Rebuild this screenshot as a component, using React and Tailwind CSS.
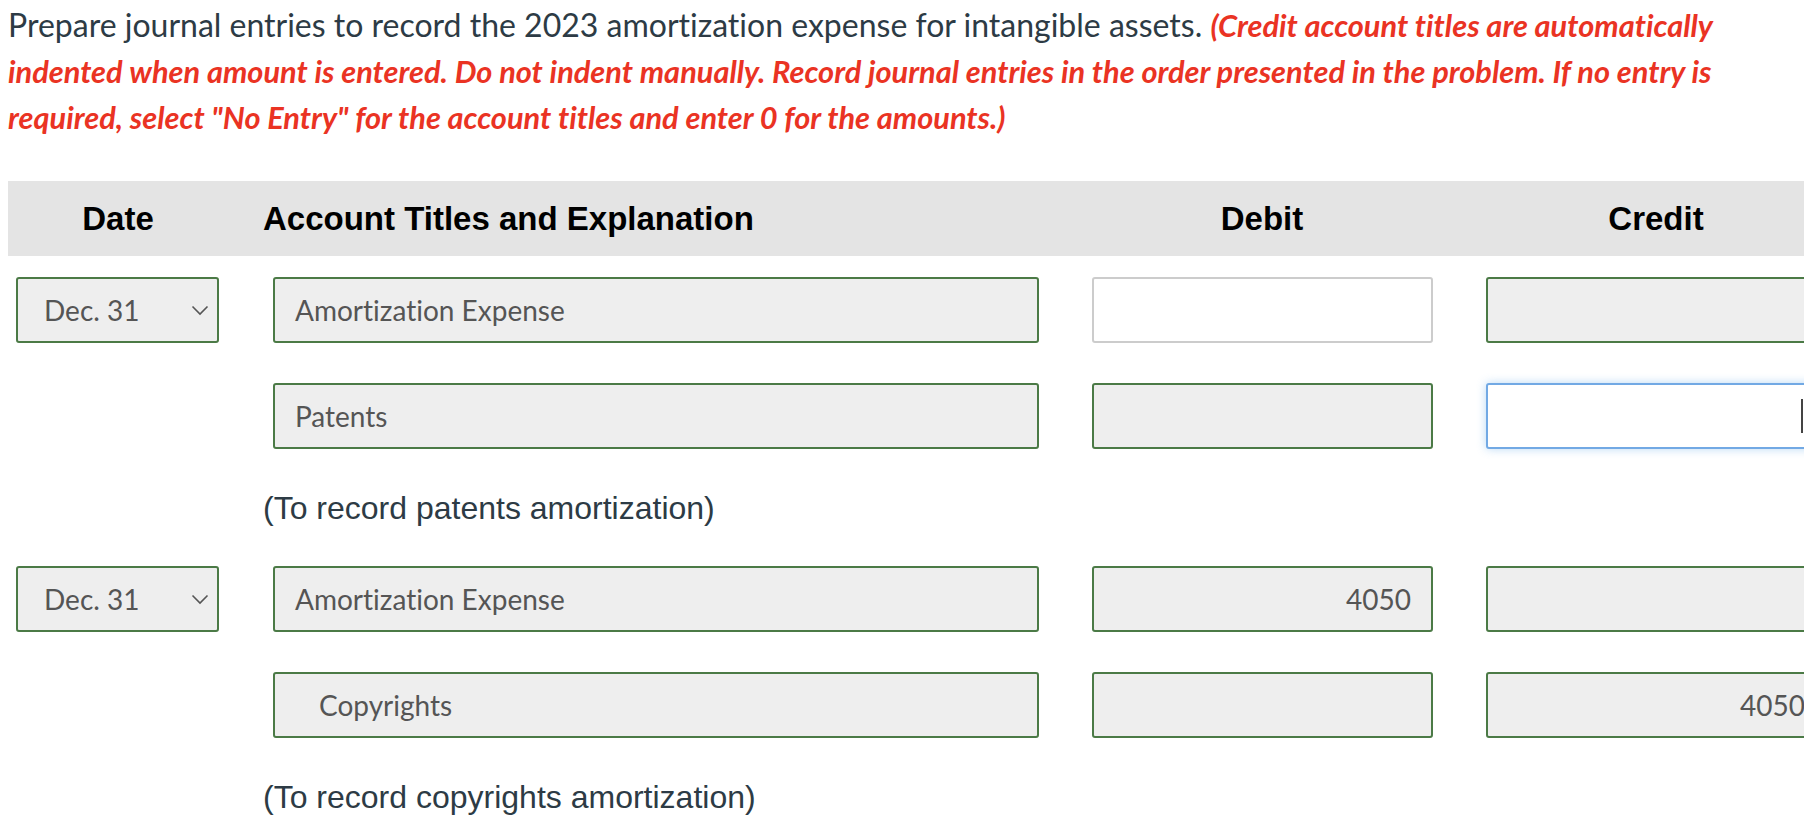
import React from "react";

const lato = { fontFamily: "Lato, 'Noto Sans', sans-serif", fontVariantLigatures: "none" };

function Chevron() {
  return (
    <svg width="18" height="11" viewBox="0 0 18 11" className="shrink-0">
      <polyline points="1.5,1.5 9,9 16.5,1.5" fill="none" stroke="#555" strokeWidth="1.6" />
    </svg>
  );
}

function DateBox() {
  return (
    <div className="ml-[8px] w-[203px] h-[66px] shrink-0 flex items-center justify-between pl-[26px] pr-[8px] bg-[#eeeeee] border-2 border-[#4b7a46] rounded-[3px] text-[28px] text-[#555]">
      <span>Dec. 31</span>
      <Chevron />
    </div>
  );
}

function Spacer() {
  return <div className="ml-[8px] w-[203px] shrink-0" />;
}

function AccountBox({ text, indent }) {
  return (
    <div
      className={
        "ml-[54px] w-[766px] h-[66px] shrink-0 flex items-center bg-[#eeeeee] border-2 border-[#4b7a46] rounded-[3px] text-[28px] text-[#555] " +
        (indent ? "pl-[44px]" : "pl-[20px]")
      }
    >
      {text}
    </div>
  );
}

function GreenAmount({ value }) {
  return (
    <div className="ml-[53px] w-[341px] h-[66px] shrink-0 flex items-center justify-end pr-[20px] bg-[#eeeeee] border-2 border-[#4b7a46] rounded-[3px] text-[28px] text-[#555]">
      {value}
    </div>
  );
}

function WhiteGray() {
  return (
    <div className="ml-[53px] w-[341px] h-[66px] shrink-0 bg-white border-2 border-[#cccccc] rounded-[3px]" />
  );
}

function Focused() {
  return (
    <div className="ml-[53px] w-[341px] h-[66px] shrink-0 flex items-center justify-end pr-[22px] bg-white border-2 border-[#72a9e4] rounded-[3px] shadow-[0_0_10px_rgba(102,170,233,0.45)]">
      <span className="block w-[2px] h-[34px] bg-[#444]" />
    </div>
  );
}

function Explanation({ text }) {
  return (
    <div
      className="h-[117px] flex items-center pl-[255px] text-[32px] text-[#2d3b45]"
      style={{ fontFamily: "'Liberation Sans', Arial, sans-serif" }}
    >
      {text}
    </div>
  );
}

export default function App() {
  return (
    <div className="w-[1816px] h-[824px] bg-white overflow-hidden" style={lato}>
      <div className="ml-[8px] w-[1796px] overflow-hidden">
        <p className="pt-[2px] text-[32px] leading-[46px] text-[#2d3b45] whitespace-nowrap">
          Prepare journal entries to record the 2023 amortization expense for intangible assets.{" "}
          <span className="font-bold italic text-[30.75px] leading-[40px] text-[#ea3323]">
            (Credit account titles are automatically
            <br />
            indented when amount is entered. Do not indent manually. Record journal entries in the order presented in the problem. If no entry is
            <br />
            required, select "No Entry" for the account titles and enter 0 for the amounts.)
          </span>
        </p>

        <div
          className="mt-[41px] h-[75px] bg-[#e4e4e4] flex items-center text-[33px] font-bold text-black"
          style={{ fontFamily: "'Liberation Sans', Arial, sans-serif" }}
        >
          <div className="w-[220px] shrink-0 text-center">Date</div>
          <div className="w-[840px] shrink-0 pl-[35px]">Account Titles and Explanation</div>
          <div className="w-[388px] shrink-0 text-center">Debit</div>
          <div className="w-[400px] shrink-0 text-center">Credit</div>
        </div>

        <div className="pt-[21px]">
          <div className="flex">
            <DateBox />
            <AccountBox text="Amortization Expense" />
            <WhiteGray />
            <GreenAmount value="" />
          </div>
          <div className="flex mt-[40px]">
            <Spacer />
            <AccountBox text="Patents" />
            <GreenAmount value="" />
            <Focused />
          </div>
          <Explanation text="(To record patents amortization)" />
          <div className="flex">
            <DateBox />
            <AccountBox text="Amortization Expense" />
            <GreenAmount value="4050" />
            <GreenAmount value="" />
          </div>
          <div className="flex mt-[40px]">
            <Spacer />
            <AccountBox text="Copyrights" indent />
            <GreenAmount value="" />
            <GreenAmount value="4050" />
          </div>
          <Explanation text="(To record copyrights amortization)" />
        </div>
      </div>
    </div>
  );
}
